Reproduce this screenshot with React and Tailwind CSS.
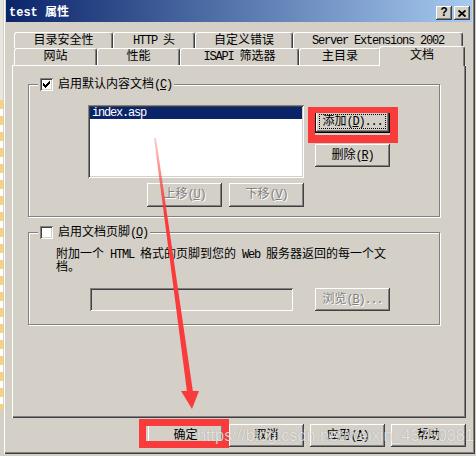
import React from 'react';

// classic 3D edges
const raisedEdge =
  'bg-[#d4d0c8] shadow-[inset_-1px_-1px_#404040,inset_1px_1px_#ffffff,inset_-2px_-2px_#808080,inset_2px_2px_#d4d0c8]';
const sunkenEdge =
  'shadow-[inset_1px_1px_#808080,inset_-1px_-1px_#ffffff,inset_2px_2px_#404040,inset_-2px_-2px_#d4d0c8]';
const disabledText = 'text-[#808080] [text-shadow:1px_1px_#ffffff]';

// half-width latin run, 6px per char like the system font
const L = ({ children }) => <span className="tracking-[-1.2px]">{children}</span>;

const Acc = ({ k }) => (
  <L>
    (<u>{k}</u>)
  </L>
);

const Button = ({ children, disabled, className = '' }) => (
  <div
    className={`flex h-[23px] w-[75px] items-center justify-center whitespace-nowrap ${raisedEdge} ${
      disabled ? disabledText : 'text-black'
    } ${className}`}
  >
    <span>{children}</span>
  </div>
);

// focused button: black frame + dotted focus rect
const FocusButton = ({ children }) => (
  <div className="h-[23px] w-[75px] border border-black">
    <div className={`flex h-full w-full items-center justify-center p-[3px] ${raisedEdge}`}>
      <div className="flex h-full w-full items-center justify-center whitespace-nowrap border border-dotted border-black">
        <span>{children}</span>
      </div>
    </div>
  </div>
);

const Checkbox = ({ checked }) => (
  <div className={`flex h-[13px] w-[13px] shrink-0 items-center justify-center bg-white ${sunkenEdge}`}>
    {checked && (
      <svg width="7" height="7" viewBox="0 0 7 7" shapeRendering="crispEdges">
        <path d="M0 2h1v1h1v1h1v-1h1v-1h1v-1h1v-1h1v3h-1v1h-1v1h-1v1h-1v1h-1v-1h-1v-1h-1z" fill="#000" />
      </svg>
    )}
  </div>
);

const GroupBox = ({ legend, className = '', children }) => (
  <div className={`relative w-[412px] border border-[#808080] shadow-[inset_1px_1px_#ffffff,1px_1px_#ffffff] ${className}`}>
    <div className="absolute -top-[7px] left-[9px] flex h-[13px] items-center gap-[5px] bg-[#d4d0c8] px-[2px]">
      {legend}
    </div>
    {children}
  </div>
);

const Tab = ({ children, className = '' }) => (
  <div
    className={`flex items-center justify-center rounded-t-[3px] border-l border-t border-r border-white border-r-[#404040] bg-[#d4d0c8] shadow-[inset_-1px_0_#808080] whitespace-pre ${className}`}
  >
    <span>{children}</span>
  </div>
);

export default function App() {
  return (
    <div className="relative flex h-[456px] w-[476px] overflow-hidden bg-[#d4d0c8] font-['Liberation_Mono','Noto_Sans_CJK_SC',monospace] text-[12px] leading-[14px] text-black">
      {/* explorer tree peeking out behind the dialog */}
      <div className="flex w-[3px] flex-col">
        <div className="h-[100px] bg-[#e8e6e0]" />
        <div className="h-[310px] bg-[repeating-linear-gradient(to_bottom,#f6d27a_0px,#f6d27a_9px,#ffffff_9px,#ffffff_16px)]" />
        <div className="flex-1 bg-[#d4d0c8]" />
      </div>

      {/* dialog window */}
      <div className="-mt-[3px] flex h-[457px] w-[472px] flex-col bg-[#d4d0c8] p-[3px] shadow-[inset_1px_1px_#d4d0c8,inset_2px_2px_#ffffff,inset_-1px_-1px_#404040,inset_-2px_-2px_#808080]">
        {/* title bar */}
        <div className="flex h-[22px] items-center bg-[linear-gradient(to_right,#0a246a,#a6caf0)] pl-[3px] pr-[2px] pt-[4px]">
          <span className="flex-1 font-bold text-white">test 属性</span>
          <div className="flex gap-[2px]">
            <div className={`flex h-[14px] w-[16px] items-center justify-center text-[12px] font-bold leading-none ${raisedEdge}`}>
              ?
            </div>
            <div className={`flex h-[14px] w-[16px] items-center justify-center ${raisedEdge}`}>
              <svg width="8" height="7" viewBox="0 0 8 7">
                <path d="M0.5 0.5L7.5 6.5M7.5 0.5L0.5 6.5" stroke="#000" strokeWidth="1.8" />
              </svg>
            </div>
          </div>
        </div>

        {/* body */}
        <div className="flex flex-col pl-[6px] pt-[10px]">
          {/* back tab row */}
          <div className="ml-[2px] flex h-[16px]">
            <Tab className="w-[99px]">目录安全性</Tab>
            <Tab className="w-[82px]">
              <L>HTTP </L>头
            </Tab>
            <Tab className="w-[98px]">自定义错误</Tab>
            <Tab className="w-[170px]">
              <L>Server Extensions 2002</L>
            </Tab>
          </div>
          {/* front tab row */}
          <div className="ml-[2px] flex h-[17px]">
            <Tab className="w-[83px]">网站</Tab>
            <Tab className="w-[83px]">性能</Tab>
            <Tab className="w-[119px]">
              <L>ISAPI </L>筛选器
            </Tab>
            <Tab className="w-[82px]">主目录</Tab>
            <Tab className="relative z-10 -mx-[2px] -mt-[2px] h-[20px] w-[86px] self-start border-b-0 pb-[2px]">
              文档
            </Tab>
          </div>

          {/* tab page */}
          <div className="h-[353px] w-[454px] bg-[#d4d0c8] pl-[16px] pt-[19px] shadow-[inset_1px_1px_#ffffff,inset_-1px_-1px_#404040,inset_-2px_-2px_#808080]">
            <GroupBox
              className="h-[133px]"
              legend={
                <>
                  <Checkbox checked />
                  <span className="whitespace-nowrap">
                    启用默认内容文档<Acc k="C" />
                  </span>
                </>
              }
            >
              <div className="flex pl-[59px] pt-[20px]">
                <div className="flex w-[216px] flex-col">
                  <div className={`h-[73px] bg-white p-[2px] ${sunkenEdge}`}>
                    <div className="h-[12px] bg-[#0a246a] pl-[2px] leading-[12px] text-white">
                      <L>index.asp</L>
                    </div>
                  </div>
                  <div className="mt-[5px] flex justify-end gap-[7px]">
                    <Button disabled className="h-[24px]">
                      上移<Acc k="U" />
                    </Button>
                    <Button disabled className="h-[24px]">
                      下移<Acc k="V" />
                    </Button>
                  </div>
                </div>
                <div className="ml-[11px] flex flex-col pt-[5px]">
                  <FocusButton>
                    添加<Acc k="D" />
                    <L>...</L>
                  </FocusButton>
                  <Button className="mt-[11px]">
                    删除<Acc k="R" />
                  </Button>
                </div>
              </div>
            </GroupBox>

            <GroupBox
              className="mt-[15px] h-[93px]"
              legend={
                <>
                  <Checkbox />
                  <span className="whitespace-nowrap">
                    启用文档页脚<Acc k="O" />
                  </span>
                </>
              }
            >
              <p className="ml-[27px] mt-[16px] whitespace-nowrap leading-[13px]">
                附加一个<L> HTML </L>格式的页脚到您的<L> Web </L>服务器返回的每一个文
                <br />
                档。
              </p>
              <div className="ml-[61px] mt-[13px] flex items-center gap-[22px]">
                <div className={`h-[23px] w-[203px] bg-[#d4d0c8] ${sunkenEdge}`} />
                <Button disabled>
                  浏览<Acc k="B" />
                  <L>...</L>
                </Button>
              </div>
            </GroupBox>
          </div>

          {/* dialog buttons */}
          <div className="mt-[6px] flex w-[454px] justify-end gap-[6px]">
            <Button className="h-[22px]">确定</Button>
            <Button className="h-[22px]">取消</Button>
            <Button className="h-[22px]">
              应用<Acc k="A" />
            </Button>
            <Button className="h-[22px]">帮助</Button>
          </div>
        </div>
      </div>

      {/* red markup drawn on top */}
      <div className="pointer-events-none absolute left-[308px] top-[107px] h-[36px] w-[90px] border-b-[8px] border-l-[7px] border-r-[8px] border-t-[6px] border-[#f93b3b]" />
      <div className="pointer-events-none absolute left-[139px] top-[419px] h-[29px] w-[90px] border-[7px] border-[#f93b3b]" />
      <svg className="pointer-events-none absolute left-0 top-0" width="476" height="456" viewBox="0 0 476 456">
        <defs>
          <linearGradient id="shaft" x1="0" y1="138" x2="0" y2="392" gradientUnits="userSpaceOnUse">
            <stop offset="0" stopColor="#f93b3b" stopOpacity="0.25" />
            <stop offset="0.3" stopColor="#f93b3b" stopOpacity="1" />
            <stop offset="1" stopColor="#f93b3b" stopOpacity="1" />
          </linearGradient>
        </defs>
        <polygon points="154,138 156,138 193,392 187,392" fill="url(#shaft)" />
        <polygon points="181,391 199,391 192,409" fill="#f93b3b" />
      </svg>

      {/* blog watermark */}
      <div className="pointer-events-none absolute left-[197px] top-[425px] whitespace-nowrap font-['Liberation_Sans',sans-serif] text-[16.3px] leading-[20px] text-white/75 [text-shadow:0_0_1px_rgba(0,0,0,0.35)]">
        https://blog.csdn.net/weixin_43750381
      </div>
    </div>
  );
}
